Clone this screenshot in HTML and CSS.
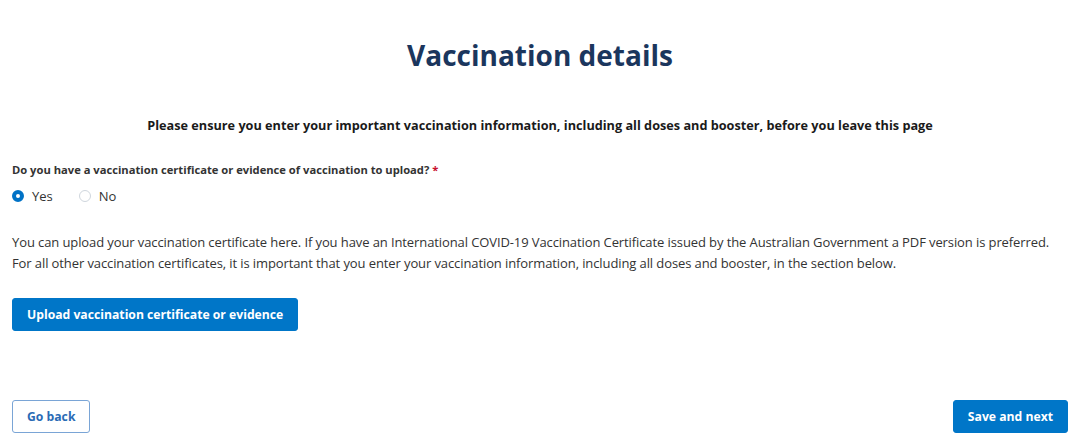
FILE: index.html
```html
<!DOCTYPE html>
<html lang="en">
<head>
<meta charset="utf-8">
<title>Vaccination details</title>
<link rel="stylesheet" href="styles.css">
</head>
<body>
<main class="page">
  <h1 class="title">Vaccination details</h1>
  <p class="notice">Please ensure you enter your important vaccination information, including all doses and booster, before you leave this page</p>
  <div class="field">
    <div class="label">Do you have a vaccination certificate or evidence of vaccination to upload? <span class="req">*</span></div>
    <div class="radios">
      <label class="radio"><span class="dot checked"></span>Yes</label>
      <label class="radio"><span class="dot"></span>No</label>
    </div>
  </div>
  <p class="info">You can upload your vaccination certificate here. If you have an International COVID-19 Vaccination Certificate issued by the Australian Government a PDF version is preferred.<br>For all other vaccination certificates, it is important that you enter your vaccination information, including all doses and booster, in the section below.</p>
  <div class="upload-row"><button class="btn primary">Upload vaccination certificate or evidence</button></div>
  <div class="actions">
    <button class="btn secondary">Go back</button>
    <button class="btn primary">Save and next</button>
  </div>
</main>
</body>
</html>
```
FILE: styles.css
```css
html, body { margin: 0; padding: 0; background: #fff; }
body { font-family: "Open Sans", "Noto Sans", sans-serif; color: #333; }
.page { padding: 0 12px; display: flex; flex-direction: column; }
.title { margin: 35px 0 0; text-align: center; font-size: 28px; line-height: 40px; font-weight: 700; color: #1b365d; }
.notice { margin: 41px 0 0; text-align: center; font-size: 12.7px; line-height: 18px; font-weight: 700; color: #1a1a1a; }
.field { margin-top: 28px; }
.label { font-size: 11.2px; line-height: 16px; font-weight: 700; color: #333; }
.req { color: #c8102e; }
.radios { display: flex; gap: 26px; margin-top: 9px; }
.radio { display: flex; align-items: center; gap: 8px; font-size: 13px; line-height: 18px; color: #333; }
.dot { width: 12px; height: 12px; border-radius: 50%; border: 1px solid #cfd6dd; box-sizing: border-box; background: #fff; }
.dot.checked { border: 4px solid #0072c6; }
.info { margin: 27px 0 0; font-size: 13px; letter-spacing: -0.1px; line-height: 21px; color: #333; }
.upload-row { margin-top: 24px; }
.btn { font-family: inherit; font-size: 12.2px; font-weight: 700; height: 33px; border-radius: 3px; padding: 0 14px; cursor: pointer; }
.btn.primary { background: #0076c8; color: #fff; border: 1px solid #0076c8; }
.btn.secondary { background: #fff; color: #2a6bb5; border: 1px solid #7aa5d6; }
.actions { display: flex; justify-content: space-between; margin-top: 69px; }
```
